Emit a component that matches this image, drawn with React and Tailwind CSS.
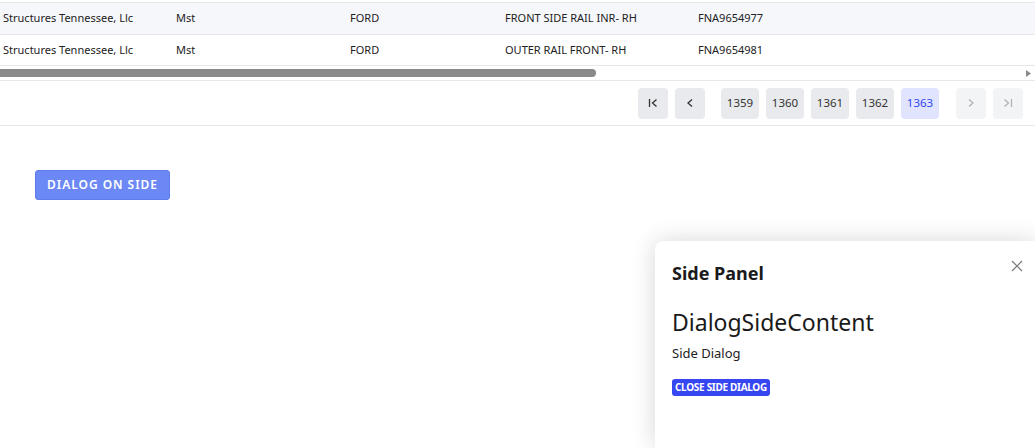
import React from 'react';

const rows = [
  ['Structures Tennessee, Llc', 'Mst', 'FORD', 'FRONT SIDE RAIL INR- RH', 'FNA9654977'],
  ['Structures Tennessee, Llc', 'Mst', 'FORD', 'OUTER RAIL FRONT- RH', 'FNA9654981'],
];

const cols = ['w-[173px]', 'w-[174px]', 'w-[155px]', 'w-[193px]', 'w-[200px]'];

function PageBtn({ children, active, disabled, wide }) {
  let cls = 'bg-[#e9eaee] text-[#333]';
  if (active) cls = 'bg-[#e0e4ff] text-[#3347ee]';
  if (disabled) cls = 'bg-[#f3f4f6] text-[#aab0b8]';
  return (
    <button className={`h-[31px] ${wide ? 'w-[38px]' : 'w-[30px]'} rounded-[4px] flex items-center justify-center text-[11.5px] ${cls}`}>
      {children}
    </button>
  );
}

export default function App() {
  return (
    <div className="w-[1035px] h-[448px] relative overflow-hidden bg-white text-[#222]" style={{ fontFamily: '"Noto Sans", "Open Sans", sans-serif' }}>
      {/* Table */}
      <div className="pt-[2px]">
        <div className="border-t border-[#e6e8ec]">
          {rows.map((r, i) => (
            <div key={i} className={`flex items-center border-b border-[#e6e8ec] text-[11px] ${i === 0 ? 'h-[32px] bg-[#f6f7fb]' : 'h-[31px] bg-white'}`}>
              {r.map((c, j) => (
                <div key={j} className={`${cols[j]} pl-[3px] whitespace-nowrap`}>{c}</div>
              ))}
            </div>
          ))}
        </div>
        {/* horizontal scrollbar */}
        <div className="h-[15px] flex items-center border-b border-[#e6e8ec]">
          <div className="flex-1 h-[8px] flex items-center">
            <div className="w-[596px] h-[8px] rounded-r-full bg-[#8a8a8a]" />
          </div>
          <div className="w-[14px] flex items-center justify-center">
            <svg width="5" height="7" viewBox="0 0 5 7"><path d="M0 0L5 3.5L0 7Z" fill="#8a8a8a" /></svg>
          </div>
        </div>
        {/* pagination */}
        <div className="h-[45px] flex items-center justify-end pr-[12px] border-b border-[#e6e8ec]">
          <div className="flex items-center gap-[7px]">
            <PageBtn>
              <svg width="12" height="12" viewBox="0 0 12 12" fill="none" stroke="#333" strokeWidth="1.3"><path d="M2.5 2V10" /><path d="M9.5 2.5L5.5 6L9.5 9.5" /></svg>
            </PageBtn>
            <PageBtn>
              <svg width="12" height="12" viewBox="0 0 12 12" fill="none" stroke="#333" strokeWidth="1.3"><path d="M8 2.5L4 6L8 9.5" /></svg>
            </PageBtn>
            <div className="w-[2px]" />
            <PageBtn wide>1359</PageBtn>
            <PageBtn wide>1360</PageBtn>
            <PageBtn wide>1361</PageBtn>
            <PageBtn wide>1362</PageBtn>
            <PageBtn wide active>1363</PageBtn>
            <div className="w-[3px]" />
            <PageBtn disabled>
              <svg width="12" height="12" viewBox="0 0 12 12" fill="none" stroke="#aab0b8" strokeWidth="1.2"><path d="M4 2.5L8 6L4 9.5" /></svg>
            </PageBtn>
            <PageBtn disabled>
              <svg width="12" height="12" viewBox="0 0 12 12" fill="none" stroke="#aab0b8" strokeWidth="1.2"><path d="M2.5 2.5L6.5 6L2.5 9.5" /><path d="M9.5 2V10" /></svg>
            </PageBtn>
          </div>
        </div>
      </div>

      <div className="pl-[35px] pt-[44px]">
        <button className="h-[30px] w-[135px] rounded-[3px] bg-[#6b88f5] border border-[#5f7cec] text-white text-[12px] font-semibold tracking-[0.08em]">
          DIALOG ON SIDE
        </button>
      </div>

      {/* Side dialog */}
      <div className="absolute left-[655px] top-[241px] w-[380px] h-[207px] bg-white rounded-tl-[8px] shadow-[0_0_24px_rgba(0,0,0,0.16)] pl-[17px] pt-[19px]">
        <div className="flex items-start justify-between pr-[12px]">
          <h2 className="text-[18px] font-bold text-[#1a1a1a] leading-[26px]">Side Panel</h2>
          <button className="mt-[0px]">
            <svg width="12" height="12" viewBox="0 0 12 12" fill="none" stroke="#777" strokeWidth="1.2"><path d="M1 1L11 11M11 1L1 11" /></svg>
          </button>
        </div>
        <div className="mt-[20px] text-[23px] leading-[32px] text-[#1a1a1a]">DialogSideContent</div>
        <div className="mt-[6px] text-[13px] leading-[18px] text-[#222]">Side Dialog</div>
        <button className="mt-[17px] h-[17px] px-[3px] rounded-[3px] bg-[#3646f0] text-white text-[10px] font-bold tracking-[-0.03em] leading-[17px]">
          CLOSE SIDE DIALOG
        </button>
      </div>
    </div>
  );
}
